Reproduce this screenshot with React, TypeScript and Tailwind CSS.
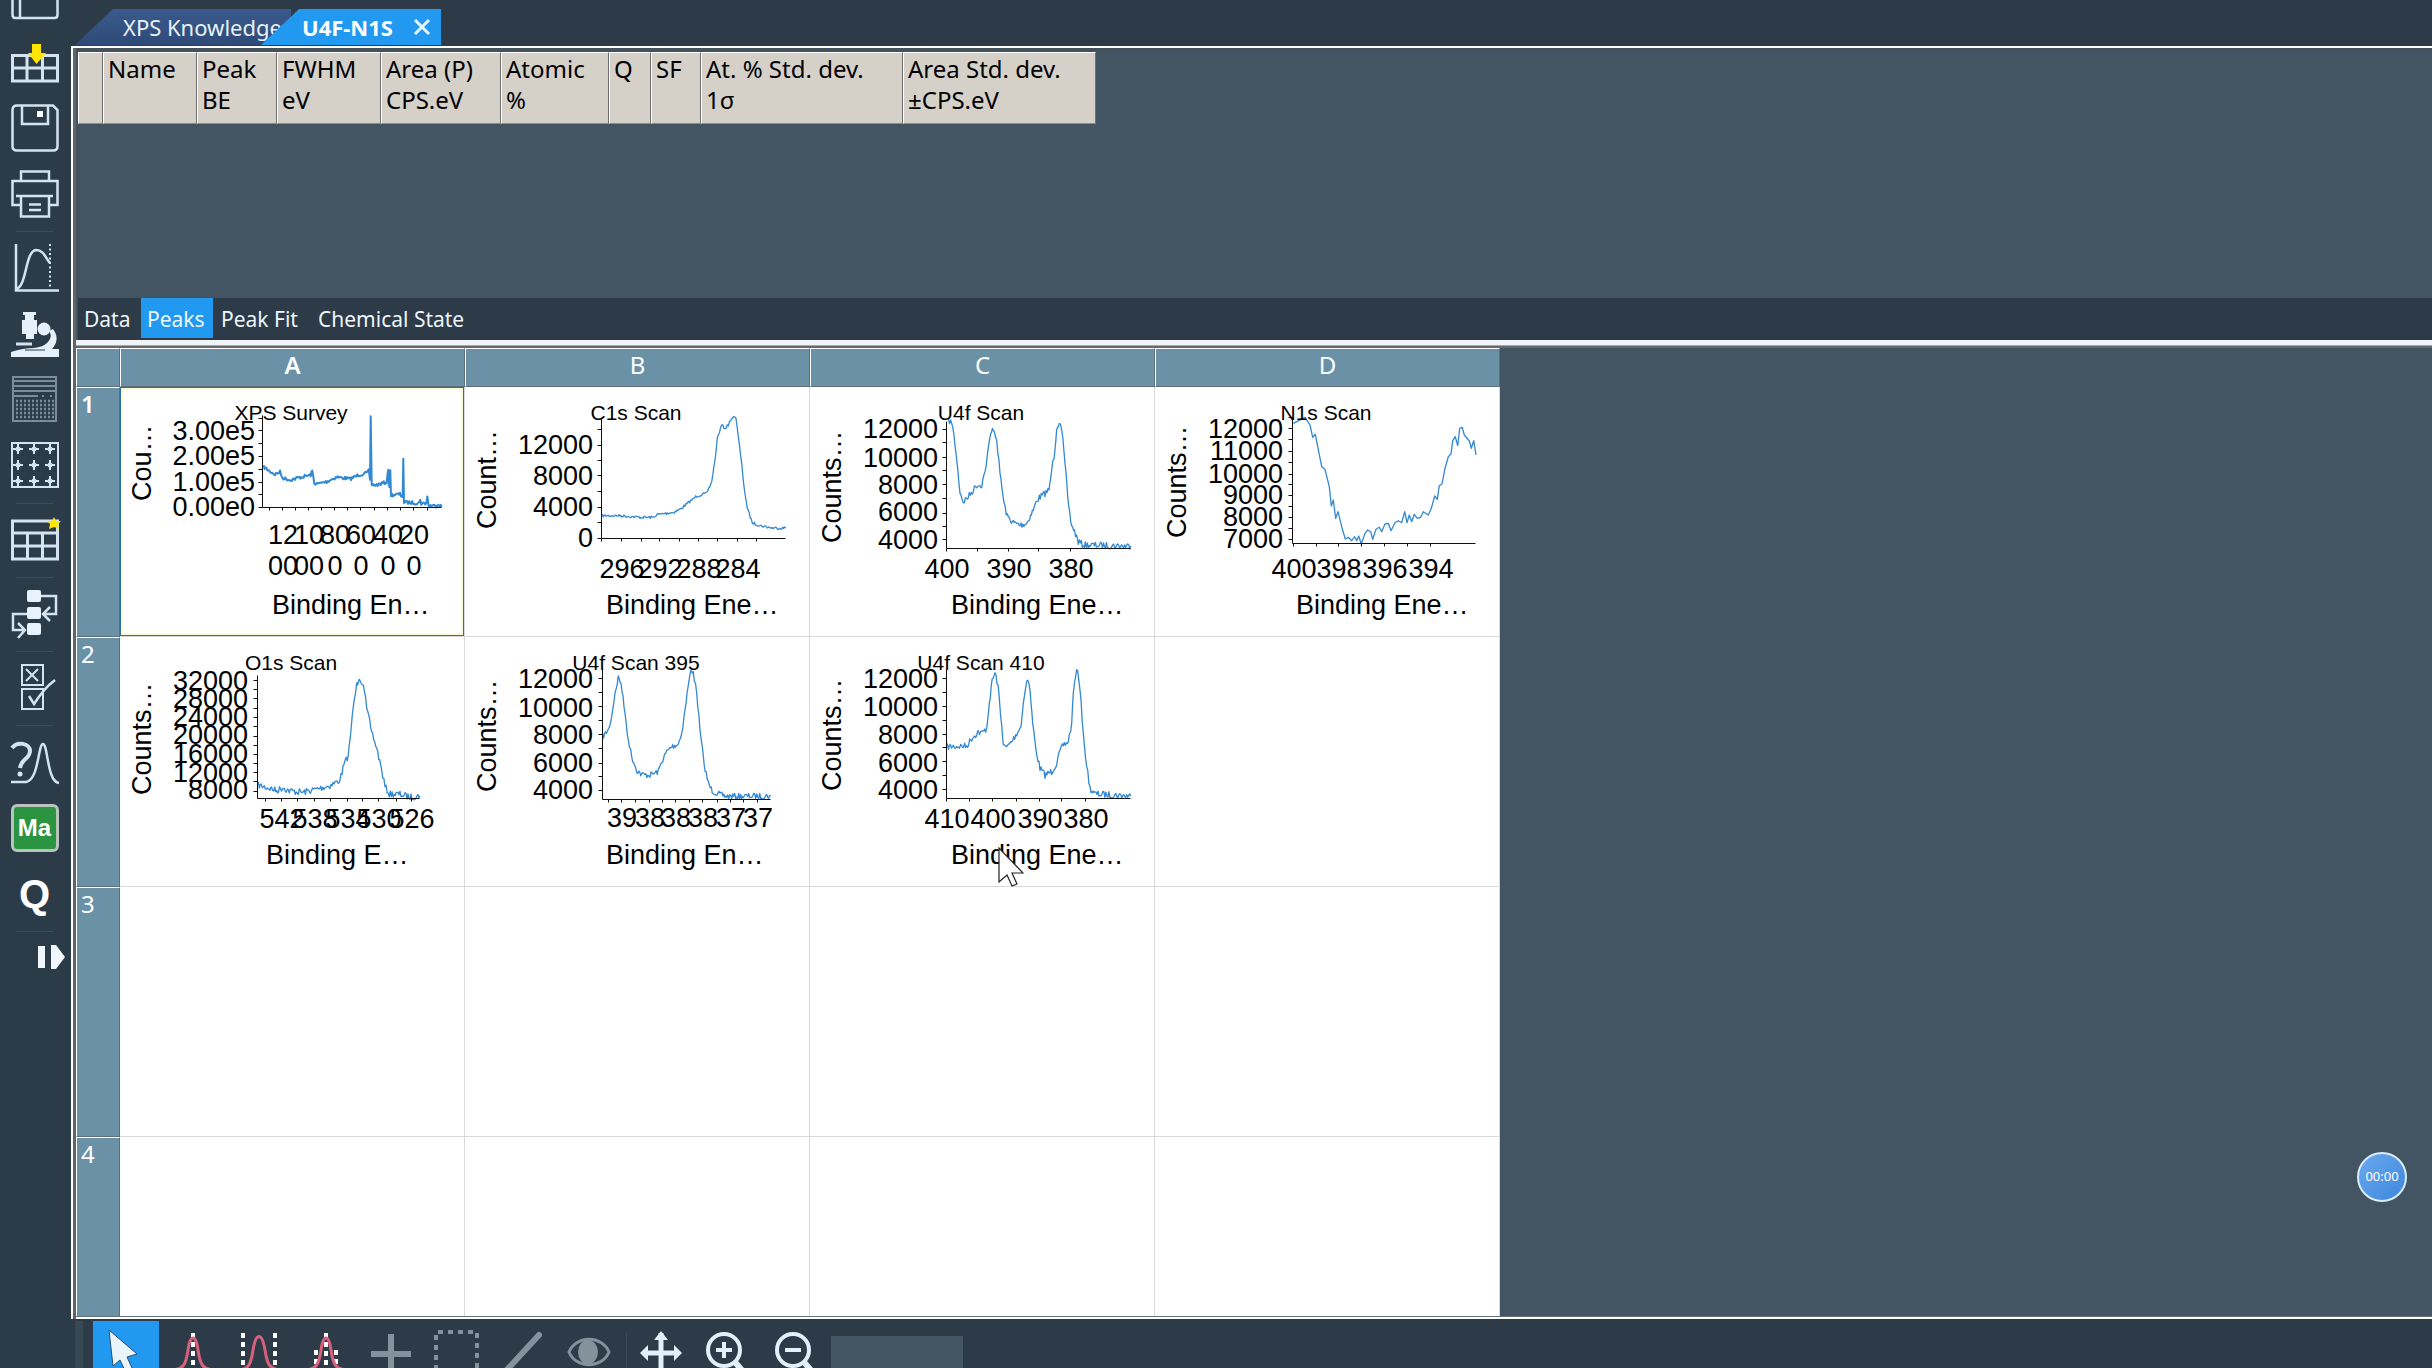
import React from "react";

type Pt = [number, number];

type ChartSpec = {
  title: string;
  yTitle: string;
  yTitleStart: number;
  xTitle: string;
  xTitleStart: number;
  axis: { x: number; top: number; bottom: number; right: number };
  yEnd: number;
  yLabels: [string, number][];
  yTicks: number[];
  xLabels: [string, number][];
  xLabels2?: [string, number][];
  xBase: number;
  xTicks: number[];
  noise: number;
  width?: number;
  trace: number[];
};

/* Traces are stored as flat x,y lists, three units to the pixel, relative to the cell. */
const UNITS = 3;

const charts: Record<string, ChartSpec> = {
  A1: {
    title: "XPS Survey",
    yTitle: "Cou…",
    yTitleStart: 114,
    xTitle: "Binding En…",
    xTitleStart: 152,
    axis: { x: 143, top: 29, bottom: 121, right: 322 },
    yEnd: 135,
    yLabels: [["3.00e5", 53], ["2.00e5", 78], ["1.00e5", 104], ["0.00e0", 129]],
    yTicks: [32, 44, 57, 70, 83, 96, 108, 121],
    xLabels: [["12", 163], ["10", 189], ["80", 215], ["60", 241], ["40", 268], ["20", 294]],
    xLabels2: [["00", 163], ["00", 189], ["0", 215], ["0", 241], ["0", 268], ["0", 294]],
    xBase: 157,
    xTicks: [150, 163, 176, 189, 202, 215, 228, 241, 255, 268, 281, 294, 308],
    noise: 5,
    width: 2,
    trace: [
      431, 240, 445, 250, 465, 262, 480, 255, 487, 272, 510, 279, 545, 270, 572, 264, 577, 252, 583, 288, 592, 291, 620, 284,
      650, 270, 690, 276, 715, 264, 742, 258, 746, 252, 750, 278, 752, 88, 755, 293, 770, 294, 800, 285, 805, 248, 808, 300,
      811, 250, 813, 324, 840, 322, 848, 330, 850, 215, 852, 346, 898, 348, 901, 336, 904, 350, 919, 348, 922, 330, 926, 356,
      950, 356, 955, 350, 965, 360,
    ],
  },
  B1: {
    title: "C1s Scan",
    yTitle: "Count…",
    yTitleStart: 142,
    xTitle: "Binding Ene…",
    xTitleStart: 141,
    axis: { x: 137, top: 31, bottom: 152, right: 321 },
    yEnd: 128,
    yLabels: [["12000", 67], ["8000", 98], ["4000", 129], ["0", 160]],
    yTicks: [43, 59, 74, 89, 105, 121, 136, 152],
    xLabels: [["296", 157], ["292", 195], ["288", 234], ["284", 273]],
    xBase: 191,
    xTicks: [137, 157, 177, 195, 215, 234, 253, 273, 292],
    noise: 4,
    trace: [
      412, 386, 465, 386, 525, 391, 565, 391, 575, 383, 625, 376, 645, 367, 665, 351, 695, 327, 725, 319, 740, 284, 750, 219,
      757, 154, 770, 114, 780, 124, 790, 114, 797, 97, 805, 91, 813, 94, 820, 149, 830, 229, 837, 299, 847, 364, 862, 407,
      885, 416, 925, 423, 962, 423,
    ],
  },
  C1: {
    title: "U4f Scan",
    yTitle: "Counts…",
    yTitleStart: 156,
    xTitle: "Binding Ene…",
    xTitleStart: 141,
    axis: { x: 137, top: 35, bottom: 162, right: 321 },
    yEnd: 128,
    yLabels: [["12000", 51], ["10000", 80], ["8000", 107], ["6000", 134], ["4000", 162]],
    yTicks: [43, 56, 71, 84, 98, 112, 127, 140, 153],
    xLabels: [["400", 137], ["390", 199], ["380", 261]],
    xBase: 191,
    xTicks: [137, 168, 199, 229, 261],
    noise: 10,
    trace: [
      415, 104, 422, 99, 432, 144, 440, 219, 450, 314, 460, 344, 475, 329, 490, 309, 500, 294, 515, 294, 525, 254, 532, 204,
      542, 144, 550, 121, 560, 159, 570, 259, 582, 349, 592, 389, 610, 407, 630, 414, 650, 409, 670, 369, 682, 337, 705, 319,
      717, 309, 725, 249, 735, 189, 740, 119, 748, 104, 755, 129, 765, 229, 773, 329, 782, 404, 805, 464, 820, 474, 962, 477,
    ],
  },
  D1: {
    title: "N1s Scan",
    yTitle: "Counts…",
    yTitleStart: 151,
    xTitle: "Binding Ene…",
    xTitleStart: 141,
    axis: { x: 138, top: 31, bottom: 157, right: 321 },
    yEnd: 128,
    yLabels: [["12000", 51], ["11000", 73], ["10000", 96], ["9000", 117], ["8000", 139], ["7000", 161]],
    yTicks: [31, 42, 53, 65, 76, 88, 98, 109, 120, 131, 142, 153],
    xLabels: [["400", 139], ["398", 184], ["396", 230], ["394", 276]],
    xBase: 191,
    xTicks: [139, 162, 184, 207, 230, 253, 276],
    noise: 0,
    trace: [
      415, 109, 450, 91, 465, 114, 473, 151, 481, 142, 500, 239, 510, 247, 523, 299, 529, 357, 535, 339, 542, 394, 549, 374,
      560, 419, 571, 456, 580, 451, 590, 461, 599, 449, 605, 461, 611, 447, 619, 471, 630, 439, 638, 429, 647, 434, 653, 457,
      663, 427, 673, 421, 680, 434, 690, 411, 700, 409, 708, 431, 720, 407, 730, 401, 740, 407, 749, 374, 756, 407, 763, 384,
      770, 404, 778, 382, 787, 394, 797, 391, 805, 374, 820, 384, 829, 364, 839, 327, 847, 337, 853, 296, 861, 291, 870, 244,
      880, 209, 888, 201, 893, 161, 901, 149, 908, 176, 914, 124, 922, 121, 928, 144, 943, 162, 949, 184, 956, 161, 963, 204,
    ],
  },
  A2: {
    title: "O1s Scan",
    yTitle: "Counts…",
    yTitleStart: 158,
    xTitle: "Binding E…",
    xTitleStart: 146,
    axis: { x: 138, top: 39, bottom: 162, right: 300 },
    yEnd: 128,
    yLabels: [["32000", 53], ["28000", 71], ["24000", 89], ["20000", 107], ["16000", 126], ["12000", 145], ["8000", 162]],
    yTicks: [44, 53, 62, 72, 81, 90, 100, 109, 118, 127, 136, 145, 155],
    xLabels: [["542", 162], ["538", 195], ["534", 228], ["530", 259], ["526", 292]],
    xBase: 191,
    xTicks: [146, 162, 178, 195, 211, 228, 243, 259, 277, 292],
    noise: 10,
    trace: [
      415, 444, 430, 449, 450, 454, 470, 461, 490, 451, 505, 461, 550, 466, 590, 456, 630, 446, 660, 429, 672, 384, 685, 354,
      693, 279, 700, 209, 710, 144, 718, 119, 730, 144, 740, 214, 755, 284, 770, 334, 785, 399, 795, 449, 808, 471, 840, 472,
      870, 480, 900, 477,
    ],
  },
  B2: {
    title: "U4f Scan 395",
    yTitle: "Counts…",
    yTitleStart: 155,
    xTitle: "Binding En…",
    xTitleStart: 141,
    axis: { x: 138, top: 33, bottom: 163, right: 306 },
    yEnd: 128,
    yLabels: [["12000", 51], ["10000", 80], ["8000", 107], ["6000", 135], ["4000", 162]],
    yTicks: [42, 56, 70, 84, 98, 112, 127, 140, 154],
    xLabels: [["39", 157], ["38", 185], ["38", 211], ["38", 238], ["37", 266], ["37", 293]],
    xBase: 190,
    xTicks: [144, 157, 171, 185, 198, 211, 225, 238, 253, 266, 279, 293],
    noise: 9,
    trace: [
      413, 299, 430, 279, 440, 239, 450, 169, 460, 121, 468, 139, 480, 229, 490, 309, 500, 359, 515, 399, 530, 413, 555, 414,
      580, 404, 590, 374, 605, 344, 620, 329, 640, 321, 650, 289, 660, 219, 670, 144, 677, 104, 685, 104, 695, 169, 705, 279,
      717, 379, 730, 439, 742, 462, 765, 473, 785, 478, 917, 477,
    ],
  },
  C2: {
    title: "U4f Scan 410",
    yTitle: "Counts…",
    yTitleStart: 154,
    xTitle: "Binding Ene…",
    xTitleStart: 141,
    axis: { x: 137, top: 33, bottom: 162, right: 321 },
    yEnd: 128,
    yLabels: [["12000", 51], ["10000", 79], ["8000", 107], ["6000", 135], ["4000", 162]],
    yTicks: [42, 56, 70, 84, 98, 111, 125, 139, 153],
    xLabels: [["410", 137], ["400", 183], ["390", 230], ["380", 276]],
    xBase: 191,
    xTicks: [137, 160, 183, 207, 230, 252, 276],
    noise: 10,
    trace: [
      412, 329, 470, 327, 485, 304, 505, 284, 515, 289, 530, 274, 538, 199, 547, 129, 555, 109, 564, 144, 572, 239, 580, 314,
      587, 334, 605, 314, 620, 289, 633, 269, 640, 199, 647, 144, 653, 125, 660, 159, 668, 259, 678, 339, 690, 394, 705, 414,
      725, 404, 740, 379, 750, 344, 760, 324, 775, 314, 785, 259, 790, 169, 797, 109, 803, 102, 810, 159, 820, 289, 830, 389,
      840, 454, 855, 471, 962, 477,
    ],
  },
};

/* Walks the control points pixel by pixel and adds a repeatable counting noise. */
function tracePath(flat: number[], noise: number): string {
  const pts: Pt[] = [];
  for (let i = 0; i < flat.length; i += 2) pts.push([flat[i], flat[i + 1]]);
  let seed = 7;
  const rand = () => {
    seed = (seed * 16807) % 2147483647;
    return seed / 2147483647 - 0.5;
  };
  const out: string[] = [];
  for (let i = 0; i < pts.length - 1; i++) {
    const [x0, y0] = pts[i];
    const [x1, y1] = pts[i + 1];
    const steps = noise ? Math.max(1, Math.round((x1 - x0) / 3)) : 1;
    for (let s = 0; s < steps; s++) {
      const t = s / steps;
      const j = s === 0 && Math.abs(y1 - y0) > 40 ? 0 : rand() * noise * 2;
      out.push(`${((x0 + (x1 - x0) * t) / UNITS).toFixed(1)},${((y0 + (y1 - y0) * t + j) / UNITS).toFixed(1)}`);
    }
  }
  const last = pts[pts.length - 1];
  out.push(`${(last[0] / UNITS).toFixed(1)},${(last[1] / UNITS).toFixed(1)}`);
  return out.join(" ");
}

function Chart({ c }: { c: ChartSpec }) {
  const { x, top, bottom, right } = c.axis;
  return (
    <svg
      viewBox="0 0 344 249"
      className="block h-[249px] w-[344px] [font-family:'Liberation_Sans',Arial,sans-serif]"
      role="img"
      aria-label={c.title}
    >
      <polyline points={tracePath(c.trace, c.noise)} fill="none" stroke="#3288d2" strokeWidth={c.width ?? 1.3} strokeLinejoin="round" />
      <path
        d={
          `M${x} ${top}V${bottom}H${right}` +
          c.yTicks.map((t) => `M${x} ${t}h-4`).join("") +
          c.xTicks.map((t) => `M${t} ${bottom}v3`).join("")
        }
        fill="none"
        stroke="#111"
        strokeWidth="1"
        transform="translate(-.5 -.5)"
      />
      <text x="171" y="33" textAnchor="middle" fontSize="21">{c.title}</text>
      <text x="0" y="0" transform={`translate(31 ${c.yTitleStart}) rotate(-90)`} fontSize="27">{c.yTitle}</text>
      {c.yLabels.map(([t, y]) => (
        <text key={t} x={c.yEnd} y={y} textAnchor="end" fontSize="27">{t}</text>
      ))}
      {c.xLabels.map(([t, lx], i) => (
        <text key={i} x={lx} y={c.xBase} textAnchor="middle" fontSize="27">{t}</text>
      ))}
      {c.xLabels2?.map(([t, lx], i) => (
        <text key={i} x={lx} y={c.xBase + 31} textAnchor="middle" fontSize="27">{t}</text>
      ))}
      <text x={c.xTitleStart} y="227" fontSize="27">{c.xTitle}</text>
    </svg>
  );
}

const LIGHT = "#d3e3ef";

const Svg = ({ children }: { children: React.ReactNode }) => (
  <svg viewBox="0 0 48 48" className="block size-12" fill="none" stroke={LIGHT} strokeWidth="2.5" aria-hidden="true">
    {children}
  </svg>
);

const crosses = [7, 23, 39].flatMap((cy) => [7, 23, 39].map((cx) => `M${cx - 5} ${cy}h10M${cx} ${cy - 5}v10`)).join("");

const sideTools: (null | { name: string; icon: React.ReactNode })[] = [
  { name: "Open", icon: <Svg><path d="M1.5 6v37q0 3 3 3h39q3 0 3-3V6M9 6v40" /></Svg> },
  {
    name: "Import grid",
    icon: (
      <Svg>
        <path d="M1.5 17.500h45v25.500h-45zM16 17v26M31.500 17v26M1.500 30h45" strokeWidth="3" />
        <path d="M21 6h9v9h5l-9.500 11L17 15h4z" fill="#ffe600" stroke="none" />
      </Svg>
    ),
  },
  {
    name: "Save",
    icon: (
      <Svg>
        <path d="M6 1.500h36l4.500 4.500v36q0 4.500-4.500 4.500H6q-4.500 0-4.500-4.500V6q0-4.500 4.500-4.500z" />
        <path d="M11 2v18h26V2" />
        <path d="M26 7h6v6h-6z" fill="#fff" stroke="none" />
      </Svg>
    ),
  },
  {
    name: "Print",
    icon: (
      <Svg>
        <path d="M10 11V1.500h28V11M9 35H1.500V11h45v24H39M5 26h37M10 26v20.500h28V26M18 34.500h12M18 40h12" />
      </Svg>
    ),
  },
  null,
  {
    name: "Processing",
    icon: (
      <Svg>
        <path d="M5 0v46.500h43M5 45c11-2 9-38 20-39 8 0 10 9 14 13" />
        <path d="M39 0v44" strokeDasharray="2 2.500" strokeWidth="2" />
      </Svg>
    ),
  },
  {
    name: "Microscope",
    icon: (
      <Svg>
        <g fill="#e4f0fa" stroke="none">
          <path d="M12 2h13v3h-2v5h3v14h-3v5h-8v-5h-4V10h3V5h-2z" />
          <circle cx="33" cy="19" r="6.500" />
          <path d="M0 42q12-4 23-4 9-1 13-5c4-4 5-8 2-12l4-2c5 7 5 13-1 20h7v8H0z" />
        </g>
        <path d="M5 34h16" strokeWidth="3" />
        <path d="M14 40h20" stroke="#2d3c49" strokeWidth="1" />
      </Svg>
    ),
  },
  {
    name: "Log",
    icon: (
      <Svg>
        <g stroke="#7d8c99">
          <path d="M2 1h43v44H2z" strokeWidth="2" />
          <path d="M3 5h41M3 10h41M3 15h41M3 20h24M31 20h2M39 20h2" strokeWidth="2" />
          <path d="M5 25h39M5 29h39M5 33h39M5 37h39M5 41h39" strokeDasharray="2 2" />
        </g>
      </Svg>
    ),
  },
  {
    name: "Map points",
    icon: (
      <Svg>
        <path d="M1 1h46v44H1z" strokeWidth="2" />
        <path d={crosses} strokeWidth="2" />
        <g fill={LIGHT} stroke="none">
          {[7, 23, 39].flatMap((cy) => [7, 23, 39].map((cx) => <circle key={`${cx}-${cy}`} cx={cx} cy={cy} r="2.500" />))}
        </g>
      </Svg>
    ),
  },
  null,
  {
    name: "New table",
    icon: (
      <Svg>
        <path d="M1.500 5h45v38h-45zM1.500 17h45M1.500 30h45M16.500 17v26M31.500 17v26" strokeWidth="3" />
        <path d="M43 1l2 4 5 0-3 3 1 5-5-2-5 2 1-5-3-3 5 0z" fill="#ffe600" stroke="none" />
      </Svg>
    ),
  },
  null,
  {
    name: "Sequence",
    icon: (
      <Svg>
        <g fill="#e8f2fa" stroke="none">
          <rect x="16" y="0" width="14" height="12" rx="2" />
          <rect x="16" y="17" width="14" height="12" rx="2" />
          <rect x="16" y="33" width="14" height="12" rx="2" />
        </g>
        <path d="M30 6h15v18H33M39 17l-7 7 7 7M16 24H2v16h11M7 33l7 7-7 8" />
      </Svg>
    ),
  },
  null,
  {
    name: "Checklist",
    icon: (
      <Svg>
        <path d="M11 1h21v20H11zM11 25h21v20H11zM15 5l12 12M27 5L15 17" strokeWidth="2" />
        <path d="M18 32l5 8C30 29 36 22 44 16" strokeWidth="2.500" />
      </Svg>
    ),
  },
  null,
  {
    name: "Identify peaks",
    icon: (
      <Svg>
        <path d="M1 10c5-7 18-5 18 3 0 8-9 8-10 17" strokeWidth="4" />
        <circle cx="9" cy="36" r="2.500" fill={LIGHT} stroke="none" />
        <path d="M0 44h15c13-2 12-38 17-38s4 38 16 39" strokeWidth="2.500" />
      </Svg>
    ),
  },
  {
    name: "Ma",
    icon: (
      <span className="flex size-12 items-center justify-center rounded-md border-3 border-[#b9c3bd] bg-[#2b9440] text-2xl font-bold text-white [font-family:'Liberation_Sans',Arial,sans-serif]">
        Ma
      </span>
    ),
  },
  {
    name: "Q",
    icon: <span className="text-[40px] leading-[44px] font-bold text-white [font-family:'Liberation_Sans',Arial,sans-serif]">Q</span>,
  },
  null,
  {
    name: "Expand",
    icon: (
      <Svg>
        <path d="M27 2h7v22h-7zM40 1h5l9 12-9 12h-5z" fill="#f0f6fb" stroke="none" />
      </Svg>
    ),
  },
];

function Sidebar() {
  return (
    <nav aria-label="Tools" className="flex w-[71px] shrink-0 flex-col overflow-hidden bg-[#2c3b48] pr-0.5">
      <div className="-mt-[37px] flex flex-col">
        {sideTools.map((t, i) =>
          t ? (
            <button key={i} type="button" aria-label={t.name} className="flex h-[66px] items-center justify-center [&_svg]:overflow-visible">
              {t.icon}
            </button>
          ) : (
            <div key={i} className="flex h-2 items-center px-4">
              <div className="h-px w-full bg-[#3c4c59]" />
            </div>
          ),
        )}
      </div>
    </nav>
  );
}

function DocumentTabs() {
  return (
    <div className="flex h-[46px] items-end bg-[#2d3b48] pb-px pl-1">
      <button
        type="button"
        className="h-9 w-[216px] overflow-hidden bg-linear-to-b from-[#3a5a8c] to-[#2f4a78] pl-12 text-left text-[22px] whitespace-nowrap text-[#e6f1fa] [clip-path:polygon(38px_0,100%_0,100%_100%,0_100%)]"
      >
        XPS Knowledge
      </button>
      <div className="-ml-[30px] flex h-9 w-[180px] items-center justify-between bg-[#2199f0] pr-[10px] pl-[41px] text-[22px] font-bold text-white [clip-path:polygon(38px_0,100%_0,100%_100%,0_100%)]">
        <button type="button" className="whitespace-nowrap">U4F-N1S</button>
        <button type="button" aria-label="Close tab">
          <svg viewBox="0 0 18 18" className="block size-[18px]" stroke="#e6f4ff" strokeWidth="3" aria-hidden="true">
            <path d="M2 2l14 14M16 2L2 16" />
          </svg>
        </button>
      </div>
    </div>
  );
}

const peakCols: [string, string, string][] = [
  ["", "", "w-[25px]"],
  ["Name", "", "w-[94px]"],
  ["Peak", "BE", "w-[80px]"],
  ["FWHM", "eV", "w-[104px]"],
  ["Area (P)", "CPS.eV", "w-[120px]"],
  ["Atomic", "%", "w-[108px]"],
  ["Q", "", "w-[42px]"],
  ["SF", "", "w-[50px]"],
  ["At. % Std. dev.", "1σ", "w-[202px]"],
  ["Area Std. dev.", "±CPS.eV", "w-[193px]"],
];

function PeakTable() {
  return (
    <div className="h-[246px] bg-[#435562]">
      <table className="w-[1018px] table-fixed border-separate border-spacing-0">
        <thead>
          <tr>
            {peakCols.map(([a, b, w], i) => (
              <th
                key={i}
                scope="col"
                className={`${w} h-[72px] border border-t-white border-r-[#6e6e6e] border-b-[#8b8b8b] border-l-white bg-[#d5d0c8] p-0 pl-1 text-left align-top text-2xl leading-[31px] font-normal whitespace-nowrap text-black`}
              >
                {a}
                <br />
                {b}
              </th>
            ))}
          </tr>
        </thead>
      </table>
    </div>
  );
}

function ViewTabs() {
  const tabs: [string, string][] = [
    ["Data", "w-[63px] pl-[6px]"],
    ["Peaks", "w-[72px] bg-[#2199f0] pl-[6px]"],
    ["Peak Fit", "w-[97px] pl-2"],
    ["Chemical State", "w-[170px] pl-2"],
  ];
  return (
    <div role="tablist" className="flex h-[42px] bg-[#2d3a48] pb-[2px] text-[21px] text-[#eef6fc]">
      {tabs.map(([t, c]) => (
        <button key={t} type="button" role="tab" aria-selected={t === "Peaks"} className={`${c} pt-1 text-left whitespace-nowrap`}>
          {t}
        </button>
      ))}
    </div>
  );
}

const headCell =
  "border border-t-white border-l-white border-r-[#5f6f7a] border-b-[#5f6f7a] bg-[#6a91a6] p-0 text-2xl text-white";

function Sheet() {
  const cols = ["A", "B", "C", "D"];
  const rows = [1, 2, 3, 4];
  return (
    <div className="min-h-0 flex-1 overflow-hidden bg-[#435562]">
      <table className="w-[1424px] table-fixed border-separate border-spacing-0 bg-white">
        <thead>
          <tr>
            <td className={`${headCell} h-[39px] w-[44px]`} />
            {cols.map((c) => (
              <th
                key={c}
                scope="col"
                className={`${headCell} h-[39px] w-[345px] pb-1.5 leading-[30px] ${c === "A" ? "font-semibold" : "font-normal"}`}
              >
                {c}
              </th>
            ))}
          </tr>
        </thead>
        <tbody>
          {rows.map((r) => (
            <tr key={r}>
              <th scope="row" className={`${headCell} pl-1 text-left align-top ${r === 1 ? "font-semibold" : "font-normal"}`}>
                {r}
              </th>
              {cols.map((c) => {
                const spec = charts[c + r];
                const selected = c === "A" && r === 1;
                return (
                  <td key={c} className="h-[250px] border-r border-b border-[#d9d9d9] p-0">
                    <div className={`h-[249px] ${selected ? "shadow-[inset_0_0_0_1px_#2f6f9f,inset_0_0_0_3px_#fbfbd8]" : ""}`}>
                      {spec && <Chart c={spec} />}
                    </div>
                  </td>
                );
              })}
            </tr>
          ))}
        </tbody>
      </table>
    </div>
  );
}

const RED = "#d9607c";
const DIM = "#84929c";

const bottomTools: { name: string; box: string; icon: React.ReactNode }[] = [
  {
    name: "Pointer",
    box: "w-[66px] bg-[#2199f0]",
    icon: <path d="M8 0L36 24l-10 3 10 22h-8L19 30l-7 6z" fill="#e9f4fb" stroke="#2f4f6f" strokeWidth="1" />,
  },
  {
    name: "Add peak",
    box: "w-[68px]",
    icon: (
      <>
        <path d="M25 3v50" stroke="#fff" strokeWidth="4" strokeDasharray="5 4" />
        <path d="M2 40c14 0 16-6 18-20 2-16 8-16 10 0 2 14 4 20 18 20" stroke={RED} strokeWidth="3" />
      </>
    ),
  },
  {
    name: "Peak range",
    box: "w-[66px]",
    icon: (
      <>
        <path d="M8 3v50M40 3v50" stroke="#fff" strokeWidth="4" strokeDasharray="5 4" />
        <path d="M2 40c12 0 14-6 16-20 3-18 9-18 12 0 2 14 4 20 18 20" stroke={RED} strokeWidth="3" />
      </>
    ),
  },
  {
    name: "Fit peaks",
    box: "w-[66px]",
    icon: (
      <>
        <path d="M25 3v50M15 20v30M35 20v30" stroke="#fff" strokeWidth="4" strokeDasharray="5 4" />
        <path d="M2 40c14 0 16-6 18-20 2-16 8-16 10 0 2 14 4 20 18 20" stroke={RED} strokeWidth="3" />
      </>
    ),
  },
  { name: "Add", box: "w-[64px]", icon: <path d="M25 4v40M5 24h40" stroke={DIM} strokeWidth="6" /> },
  {
    name: "Select area",
    box: "w-[66px]",
    icon: <path d="M5 50V2h41v48" stroke={DIM} strokeWidth="4" strokeDasharray="5 5" />,
  },
  { name: "Draw line", box: "w-[66px]", icon: <path d="M42 5L6 44" stroke={DIM} strokeWidth="6" strokeLinecap="round" /> },
  {
    name: "Show",
    box: "w-[68px]",
    icon: (
      <>
        <path d="M5 22C12 5 38 5 45 22 38 39 12 39 5 22z" stroke={DIM} strokeWidth="3" />
        <ellipse cx="24" cy="22" rx="10" ry="12" fill={DIM} />
      </>
    ),
  },
];

const viewTools: { name: string; icon: React.ReactNode }[] = [
  {
    name: "Pan",
    icon: (
      <g fill="#e2f0fa">
        <path d="M25 3v42M7 23h36" stroke="#e2f0fa" strokeWidth="5" />
        <path d="M25 1l7 9H18zM4 23l8-8v16zM46 23l-8-8v16z" />
      </g>
    ),
  },
  {
    name: "Zoom in",
    icon: (
      <>
        <circle cx="20" cy="20" r="16" stroke="#e2f0fa" strokeWidth="4" />
        <path d="M20 12v16M12 20h16" stroke="#e2f0fa" strokeWidth="4" />
        <path d="M30 31l12 14" stroke="#e2f0fa" strokeWidth="6" />
      </>
    ),
  },
  {
    name: "Zoom out",
    icon: (
      <>
        <circle cx="21" cy="20" r="16" stroke="#e2f0fa" strokeWidth="4" />
        <path d="M13 20h16" stroke="#e2f0fa" strokeWidth="4" />
        <path d="M31 31l12 14" stroke="#e2f0fa" strokeWidth="6" />
      </>
    ),
  },
];

function ToolIcon({ children }: { children: React.ReactNode }) {
  return (
    <svg viewBox="0 0 50 50" className="size-[50px] shrink-0" fill="none" aria-hidden="true">
      {children}
    </svg>
  );
}

function BottomBar() {
  return (
    <div className="flex h-[49px] shrink-0 items-start overflow-hidden bg-[#2d3b48] pt-0.5">
      <div className="mr-[10px] ml-1 h-full w-2 bg-[#374854]" />
      {bottomTools.map((t) => (
        <button key={t.name} type="button" aria-label={t.name} className={`${t.box} flex h-14 shrink-0 justify-center pt-[9px]`}>
          <ToolIcon>{t.icon}</ToolIcon>
        </button>
      ))}
      <div className="mt-3 ml-[3px] h-full w-px bg-[#3c4c59]" />
      {viewTools.map((t) => (
        <button key={t.name} type="button" aria-label={t.name} className="flex h-14 w-[68px] shrink-0 justify-center pt-[9px]">
          <ToolIcon>{t.icon}</ToolIcon>
        </button>
      ))}
      <input aria-label="Readout" className="mt-[15px] h-9 w-[132px] bg-[#435562]" />
    </div>
  );
}

export default function App() {
  return (
    <div className="relative flex h-screen overflow-hidden bg-[#2c3b48] [font-family:'Noto_Sans','Open_Sans',sans-serif]">
      <Sidebar />
      <div className="flex min-w-0 flex-1 flex-col">
        <DocumentTabs />
        <div className="flex min-h-0 flex-1 border-t-2 border-l-2 border-white">
          <div className="flex min-w-0 flex-1 flex-col border-l-3 border-[#5d666d]">
            <div className="border-t-4 border-l-2 border-[#46525b]">
              <PeakTable />
              <ViewTabs />
            </div>
            <div className="h-1.5 border-b border-[#a8a8a8] bg-[#f0f3f8]" />
            <div className="h-0.5 bg-[#66696b]" />
            <Sheet />
            <div className="h-px bg-[#66757c]" />
            <div className="h-0.5 bg-white" />
          </div>
        </div>
        <BottomBar />
      </div>

      <button
        type="button"
        className="absolute right-[25px] bottom-[166px] flex size-[50px] items-center justify-center rounded-full border-2 border-[#dcebfa] bg-linear-to-br from-[#6aa9ee] to-[#3d87dc] text-[13px] text-white"
      >
        00:00
      </button>
      <svg viewBox="0 0 26 40" className="pointer-events-none absolute top-[847px] left-[998px] h-10 w-[26px]" aria-hidden="true">
        <path d="M1 1v34l8-7 5 11 5-2-5-11h11z" fill="#fff" stroke="#222" strokeWidth="1.200" />
      </svg>
    </div>
  );
}
